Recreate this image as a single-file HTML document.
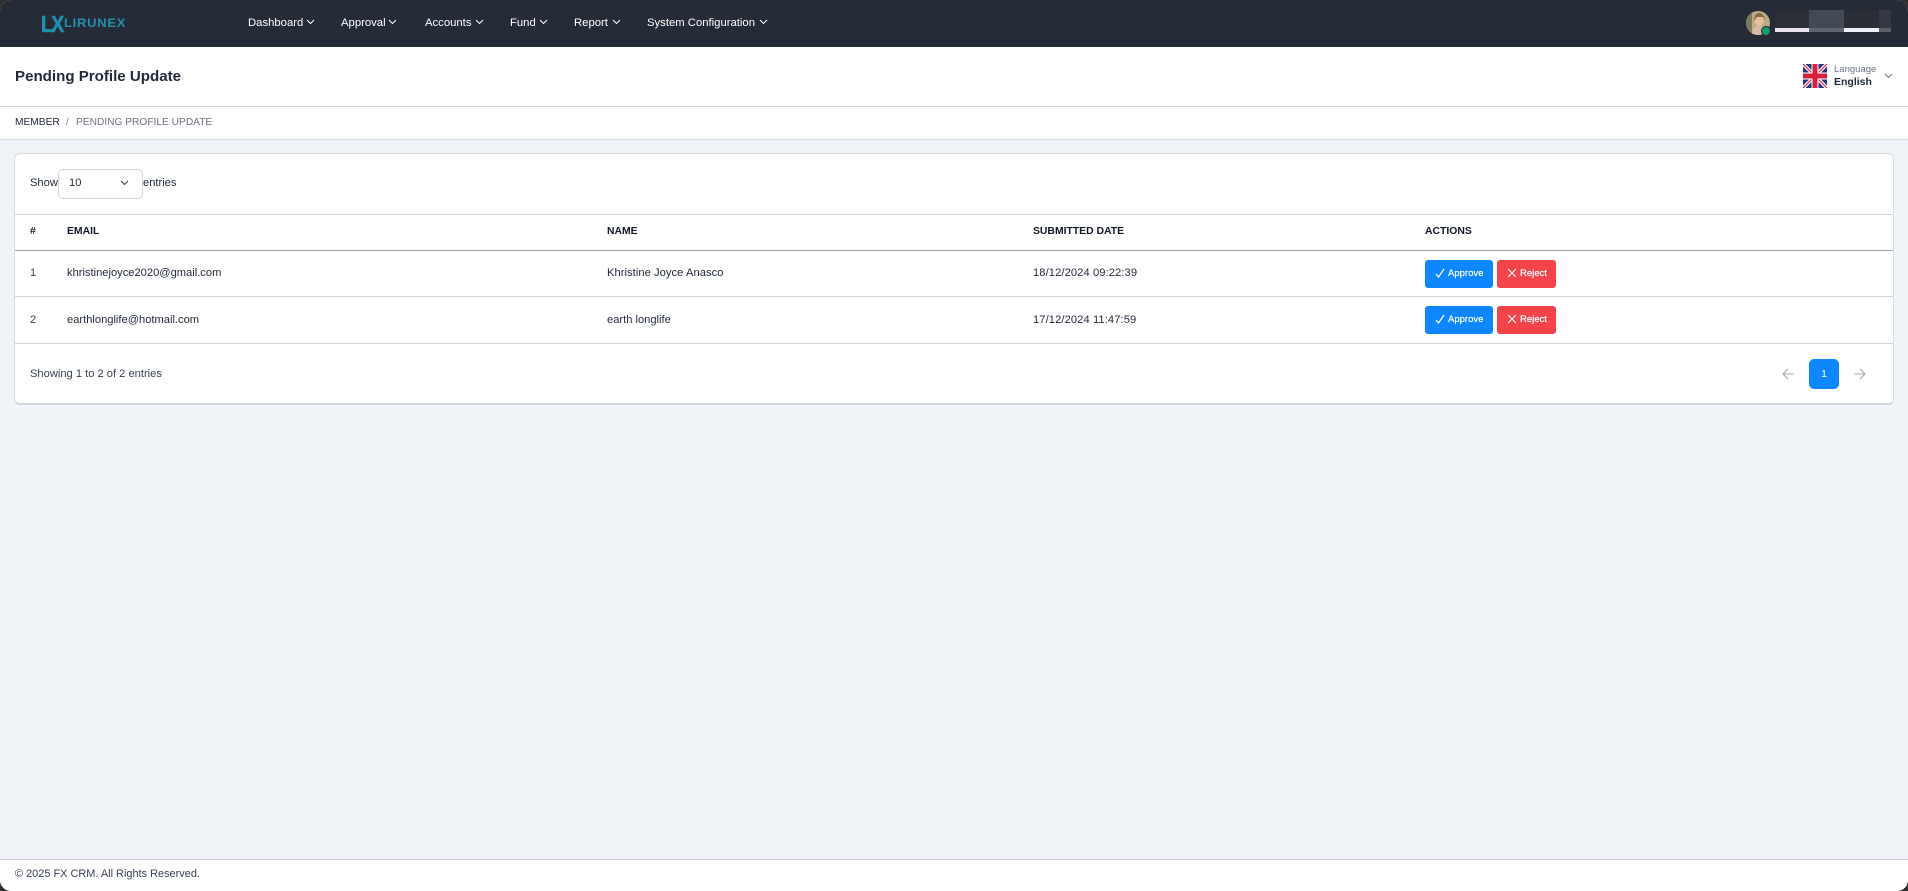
<!DOCTYPE html>
<html><head><meta charset="utf-8"><title>Pending Profile Update</title>
<style>
*{box-sizing:border-box}
html,body{margin:0;padding:0;background:#2e2e2e}
#p{position:relative;width:1908px;height:891px;overflow:hidden;background:#f0f3f8;border-radius:11px;font-family:"Liberation Sans",sans-serif;font-size:11.15px;color:#1f2937}
.a{position:absolute;white-space:nowrap;line-height:14px}
.nav{color:#fff;top:16px;font-size:11.3px}
.th{top:225px;font-weight:700;font-size:10.4px;color:#111827}
.btn{position:absolute;height:28px;border-radius:3px;color:#fff;font-size:9.5px;line-height:28px;white-space:nowrap;-webkit-text-stroke:.2px #fff}
.blue{background:#0d86ff;left:1425px;width:68px}
.red{background:#f2444a;left:1497px;width:59px}
.btn svg{position:absolute;left:10px;top:8px}
.btn span{position:absolute;top:0}
.line{position:absolute;height:1px}
svg{position:absolute;overflow:visible}
</style></head><body>
<div id="p">
<div style="position:absolute;left:0;top:0;width:1908px;height:47px;background:#252b37"></div>

<div class="a" style="left:41px;top:12px;font-size:23px;line-height:24px;font-weight:700;color:#2191ab;letter-spacing:-1.8px;transform:scaleX(.84);transform-origin:0 50%;-webkit-text-stroke:.6px #2191ab">LX</div>
<div class="a" style="left:64px;top:16px;font-size:12px;font-weight:700;color:#2191ab;letter-spacing:.7px;transform:scaleX(1.08);transform-origin:0 50%">LIRUNEX</div>

<div class="a nav" style="left:248px">Dashboard</div>
<svg style="left:306px;top:19px" width="9" height="6" fill="none" stroke="#fff" stroke-width="1"><path d="M1 1l3.5 3.5L8 1"/></svg>
<div class="a nav" style="left:341px">Approval</div>
<svg style="left:388px;top:19px" width="9" height="6" fill="none" stroke="#fff" stroke-width="1"><path d="M1 1l3.5 3.5L8 1"/></svg>
<div class="a nav" style="left:425px">Accounts</div>
<svg style="left:475px;top:19px" width="9" height="6" fill="none" stroke="#fff" stroke-width="1"><path d="M1 1l3.5 3.5L8 1"/></svg>
<div class="a nav" style="left:510px">Fund</div>
<svg style="left:539px;top:19px" width="9" height="6" fill="none" stroke="#fff" stroke-width="1"><path d="M1 1l3.5 3.5L8 1"/></svg>
<div class="a nav" style="left:574px">Report</div>
<svg style="left:612px;top:19px" width="9" height="6" fill="none" stroke="#fff" stroke-width="1"><path d="M1 1l3.5 3.5L8 1"/></svg>
<div class="a nav" style="left:647px">System Configuration</div>
<svg style="left:759px;top:19px" width="9" height="6" fill="none" stroke="#fff" stroke-width="1"><path d="M1 1l3.5 3.5L8 1"/></svg>

<svg style="left:1746px;top:11px" width="28" height="26">
<defs><clipPath id="c"><circle cx="12" cy="12" r="12"/></clipPath></defs>
<g clip-path="url(#c)"><rect width="24" height="24" fill="#b9ab82"/><rect x="0" width="6" height="24" fill="#7c7a5c"/><ellipse cx="13" cy="9" rx="5" ry="6" fill="#e6bea0"/><path d="M6 24c0-7 3-9 7-9s7 2 7 9z" fill="#d9b9a8"/><path d="M8 10c0-6 3-8 5-8s6 2 6 8l-2-4h-6z" fill="#8c6a45"/></g>
<circle cx="20" cy="20" r="4.5" fill="#0aa06a" stroke="#252b37" stroke-width="1"/>
</svg>
<div style="position:absolute;left:1775px;top:10px;width:34px;height:18px;background:#2b2f38"></div>
<div style="position:absolute;left:1809px;top:10px;width:35px;height:18px;background:#434a54"></div>
<div style="position:absolute;left:1844px;top:10px;width:35px;height:18px;background:#2a2e37"></div>
<div style="position:absolute;left:1879px;top:10px;width:12px;height:18px;background:#333842"></div>
<div style="position:absolute;left:1775px;top:28px;width:34px;height:4px;background:#e8e4ec"></div>
<div style="position:absolute;left:1809px;top:28px;width:35px;height:4px;background:#5f646e"></div>
<div style="position:absolute;left:1844px;top:28px;width:35px;height:4px;background:#eceef4"></div>
<div style="position:absolute;left:1879px;top:28px;width:12px;height:4px;background:#5a5f6a"></div>

<div style="position:absolute;left:0;top:47px;width:1908px;height:60px;background:#fff;border-bottom:1px solid #d3d5de"></div>
<div class="a" style="left:15px;top:68px;font-size:15.1px;line-height:18px;font-weight:700;color:#1f2937">Pending Profile Update</div>

<svg style="left:1803px;top:64px" width="24" height="24" viewBox="0 0 24 24">
<rect width="24" height="24" fill="#1f3a7c"/>
<path d="M0 0L24 24M24 0L0 24" stroke="#fff" stroke-width="3.5"/>
<path d="M0 0L24 24M24 0L0 24" stroke="#d8203c" stroke-width="1.2"/>
<path d="M12 0V24M0 12H24" stroke="#fff" stroke-width="7"/>
<path d="M12 0V24M0 12H24" stroke="#d8203c" stroke-width="5"/>
</svg>
<div class="a" style="left:1834px;top:63px;font-size:9.5px;color:#6b7280">Language</div>
<div class="a" style="left:1834px;top:75px;font-size:10.5px;font-weight:700;color:#1f2937">English</div>
<svg style="left:1884px;top:73px" width="9" height="6" fill="none" stroke="#6b7280" stroke-width="1"><path d="M1 1l3.5 3.5L8 1"/></svg>

<div style="position:absolute;left:0;top:107px;width:1908px;height:33px;background:#fff;border-bottom:1px solid #dfe2e9"></div>
<div class="a" style="left:15px;top:116px;font-size:10.2px;color:#1f2937">MEMBER</div>
<div class="a" style="left:66px;top:116px;font-size:10.2px;color:#6b7280">/</div>
<div class="a" style="left:76px;top:116px;font-size:10.2px;color:#6b7280">PENDING PROFILE UPDATE</div>

<div style="position:absolute;left:14px;top:153px;width:1880px;height:252px;background:#fff;border:1px solid #d8dbe2;border-bottom:2px solid #d3d6dd;border-radius:6px"></div>
<div class="a" style="left:30px;top:176px">Show</div>
<div style="position:absolute;left:58px;top:169px;width:85px;height:30px;border:1px solid #d1d5db;border-radius:5px;background:#fff"></div>
<div class="a" style="left:69px;top:176px">10</div>
<svg style="left:120px;top:180px" width="9" height="6" fill="none" stroke="#374151" stroke-width="1.1"><path d="M1 1l3.5 3.5L8 1"/></svg>
<div class="a" style="left:143px;top:176px">entries</div>

<div class="line" style="left:15px;top:214px;width:1878px;background:#d3d5dc"></div>
<div class="a th" style="left:30px">#</div>
<div class="a th" style="left:67px">EMAIL</div>
<div class="a th" style="left:607px">NAME</div>
<div class="a th" style="left:1033px">SUBMITTED DATE</div>
<div class="a th" style="left:1425px">ACTIONS</div>
<div class="line" style="left:15px;top:250px;width:1878px;background:#9ca3af"></div>

<div class="a" style="left:30px;top:266px;color:#4b3d28">1</div>
<div class="a" style="left:67px;top:266px">khristinejoyce2020@gmail.com</div>
<div class="a" style="left:607px;top:266px;letter-spacing:.06px">Khristine Joyce Anasco</div>
<div class="a" style="left:1033px;top:266px;letter-spacing:.1px">18/12/2024 09:22:39</div>
<div class="btn blue" style="top:260px"><svg width="11" height="11" fill="none" stroke="#fff" stroke-width="1.2"><path d="M1 6l2.5 3L9 1"/></svg><span style="left:23px">Approve</span></div>
<div class="btn red" style="top:260px"><svg width="11" height="11" fill="none" stroke="#fff" stroke-width="1.1"><path d="M1 1l8 8M9 1l-8 8"/></svg><span style="left:23px">Reject</span></div>
<div class="line" style="left:15px;top:296px;width:1878px;background:#d3d5dc"></div>

<div class="a" style="left:30px;top:313px;color:#374151">2</div>
<div class="a" style="left:67px;top:313px">earthlonglife@hotmail.com</div>
<div class="a" style="left:607px;top:313px">earth longlife</div>
<div class="a" style="left:1033px;top:313px;letter-spacing:.1px">17/12/2024 11:47:59</div>
<div class="btn blue" style="top:306px"><svg width="11" height="11" fill="none" stroke="#fff" stroke-width="1.2"><path d="M1 6l2.5 3L9 1"/></svg><span style="left:23px">Approve</span></div>
<div class="btn red" style="top:306px"><svg width="11" height="11" fill="none" stroke="#fff" stroke-width="1.1"><path d="M1 1l8 8M9 1l-8 8"/></svg><span style="left:23px">Reject</span></div>
<div class="line" style="left:15px;top:343px;width:1878px;background:#d3d5dc"></div>

<div class="a" style="left:30px;top:367px;color:#374151">Showing 1 to 2 of 2 entries</div>
<svg style="left:1782px;top:368px" width="13" height="12" fill="none" stroke="#a3a8b2" stroke-width="1.1"><path d="M12 6H1M6 1L1 6l5 5"/></svg>
<div style="position:absolute;left:1809px;top:359px;width:30px;height:30px;background:#0d86ff;border-radius:5px;color:#fff;font-size:10.5px;line-height:30px;text-align:center">1</div>
<svg style="left:1853px;top:368px" width="13" height="12" fill="none" stroke="#a3a8b2" stroke-width="1.1"><path d="M1 6h11M7 1l5 5-5 5"/></svg>

<div style="position:absolute;left:0;top:859px;width:1908px;height:32px;background:#fff;border-top:1px solid #d3d5de"></div>
<div class="a" style="left:15px;top:867px;font-size:10.95px;color:#374151">© 2025 FX CRM. All Rights Reserved.</div>
</div>
</body></html>
